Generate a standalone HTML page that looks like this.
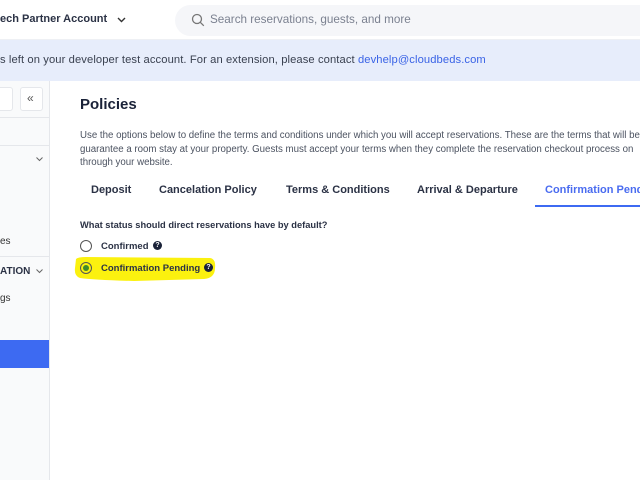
<!DOCTYPE html>
<html><head><meta charset="utf-8"><style>
*{margin:0;padding:0;box-sizing:border-box}
body{width:640px;height:480px;overflow:hidden;background:#fff;font-family:"Liberation Sans",sans-serif;position:relative;color:#1f2937}
.abs{position:absolute;white-space:nowrap}
</style></head><body>
<!-- header -->
<div class="abs" style="left:0;top:0;width:640px;height:40px;background:#fff;border-bottom:1px solid #eef0f4"></div>
<div class="abs" style="left:0;top:13px;font-size:11px;font-weight:bold;color:#2b3245">ech Partner Account</div>
<svg class="abs" style="left:117px;top:17px" width="9" height="6" viewBox="0 0 9 6"><path d="M1 1l3.5 3.5L8 1" stroke="#333" stroke-width="1.4" fill="none"/></svg>
<div class="abs" style="left:175px;top:5px;width:480px;height:31px;border-radius:16px;background:#f5f6f9"></div>
<svg class="abs" style="left:191px;top:13px" width="14" height="14" viewBox="0 0 14 14"><circle cx="6" cy="6" r="4.5" stroke="#777" stroke-width="1.3" fill="none"/><path d="M9.3 9.3l3.5 3.5" stroke="#777" stroke-width="1.3"/></svg>
<div class="abs" style="left:210px;top:13px;font-size:11.7px;color:#7b8190">Search reservations, guests, and more</div>
<!-- banner -->
<div class="abs" style="left:0;top:40px;width:640px;height:41px;background:#e7edfb"></div>
<div class="abs" style="left:0;top:54px;font-size:11.2px;color:#3a4150;letter-spacing:0.1px">s left on your developer test account. For an extension, please contact <span style="color:#3a63e6">devhelp@cloudbeds.com</span></div>
<!-- sidebar -->
<div class="abs" style="left:0;top:81px;width:50px;height:399px;background:#f9fafb;border-right:1px solid #e5e7eb"></div>
<div class="abs" style="left:-4px;top:87px;width:17px;height:24px;border:1px solid #e5e7eb;border-radius:3px;background:#fff"></div>
<div class="abs" style="left:20px;top:87px;width:23px;height:24px;border:1px solid #e5e7eb;border-radius:3px;background:#fff"></div>
<div class="abs" style="left:27px;top:91px;font-size:12px;color:#555">«</div>
<div class="abs" style="left:0;top:117px;width:50px;height:1px;background:#e5e7eb"></div>
<div class="abs" style="left:0;top:145px;width:50px;height:1px;background:#e5e7eb"></div>
<svg class="abs" style="left:36px;top:157px" width="7" height="5" viewBox="0 0 7 5"><path d="M.5 .5l3 3 3-3" stroke="#666" fill="none"/></svg>
<div class="abs" style="left:0;top:236px;font-size:10px;color:#333">es</div>
<div class="abs" style="left:0;top:256px;width:50px;height:1px;background:#e5e7eb"></div>
<div class="abs" style="left:0;top:266px;font-size:10px;font-weight:bold;color:#2b3245">ATION</div>
<svg class="abs" style="left:36px;top:269px" width="7" height="5" viewBox="0 0 7 5"><path d="M.5 .5l3 3 3-3" stroke="#666" fill="none"/></svg>
<div class="abs" style="left:0;top:293px;font-size:10px;color:#333">gs</div>
<div class="abs" style="left:0;top:340px;width:49px;height:28px;background:#3d6af2"></div>
<!-- main -->
<div class="abs" style="left:80px;top:96px;font-size:15px;font-weight:bold;color:#1a2238">Policies</div>
<div class="abs" style="left:80px;top:129px;font-size:9.7px;line-height:13.6px;color:#4b5260">Use the options below to define the terms and conditions under which you will accept reservations. These are the terms that will be<br>guarantee a room stay at your property. Guests must accept your terms when they complete the reservation checkout process on<br>through your website.</div>
<div class="abs" style="left:91px;top:184px;font-size:11px;font-weight:bold;color:#2b3245">Deposit</div>
<div class="abs" style="left:159px;top:184px;font-size:11px;font-weight:bold;color:#2b3245">Cancelation Policy</div>
<div class="abs" style="left:286px;top:184px;font-size:11px;font-weight:bold;color:#2b3245">Terms &amp; Conditions</div>
<div class="abs" style="left:417px;top:184px;font-size:11px;font-weight:bold;color:#2b3245">Arrival &amp; Departure</div>
<div class="abs" style="left:545px;top:184px;font-size:11px;font-weight:bold;color:#4a6cf0">Confirmation Pending</div>
<div class="abs" style="left:535px;top:205px;width:110px;height:2px;background:#3d6af2"></div>
<div class="abs" style="left:80px;top:220px;font-size:9.3px;font-weight:bold;color:#2b3245">What status should direct reservations have by default?</div>
<div class="abs" style="left:80px;top:240px;width:12px;height:12px;border:1.3px solid #555;border-radius:50%"></div>
<div class="abs" style="left:101px;top:241px;font-size:9.5px;font-weight:bold;color:#2b3245">Confirmed</div>
<div class="abs" style="left:153px;top:241px;width:9px;height:9px;border-radius:50%;background:#1a2238;color:#fff;font-size:7px;font-weight:bold;text-align:center;line-height:9px">?</div>
<svg class="abs" style="left:74px;top:256px" width="143" height="26" viewBox="0 0 143 26"><path d="M2 3 Q4 1 12 1 L136 2 Q142 3 141 12 Q141 22 130 23 L60 25 Q20 24 6 22 Q0 20 1 12 Z" fill="#fbf10f"/></svg>
<div class="abs" style="left:80px;top:262px;width:12px;height:12px;border:1.3px solid #555;border-radius:50%"></div>
<div class="abs" style="left:83px;top:265px;width:6px;height:6px;border-radius:50%;background:#3f8a2a"></div>
<div class="abs" style="left:101px;top:263px;font-size:9.5px;font-weight:bold;color:#2b3245">Confirmation Pending</div>
<div class="abs" style="left:204px;top:263px;width:9px;height:9px;border-radius:50%;background:#1a2238;color:#fff;font-size:7px;font-weight:bold;text-align:center;line-height:9px">?</div>
</body></html>
